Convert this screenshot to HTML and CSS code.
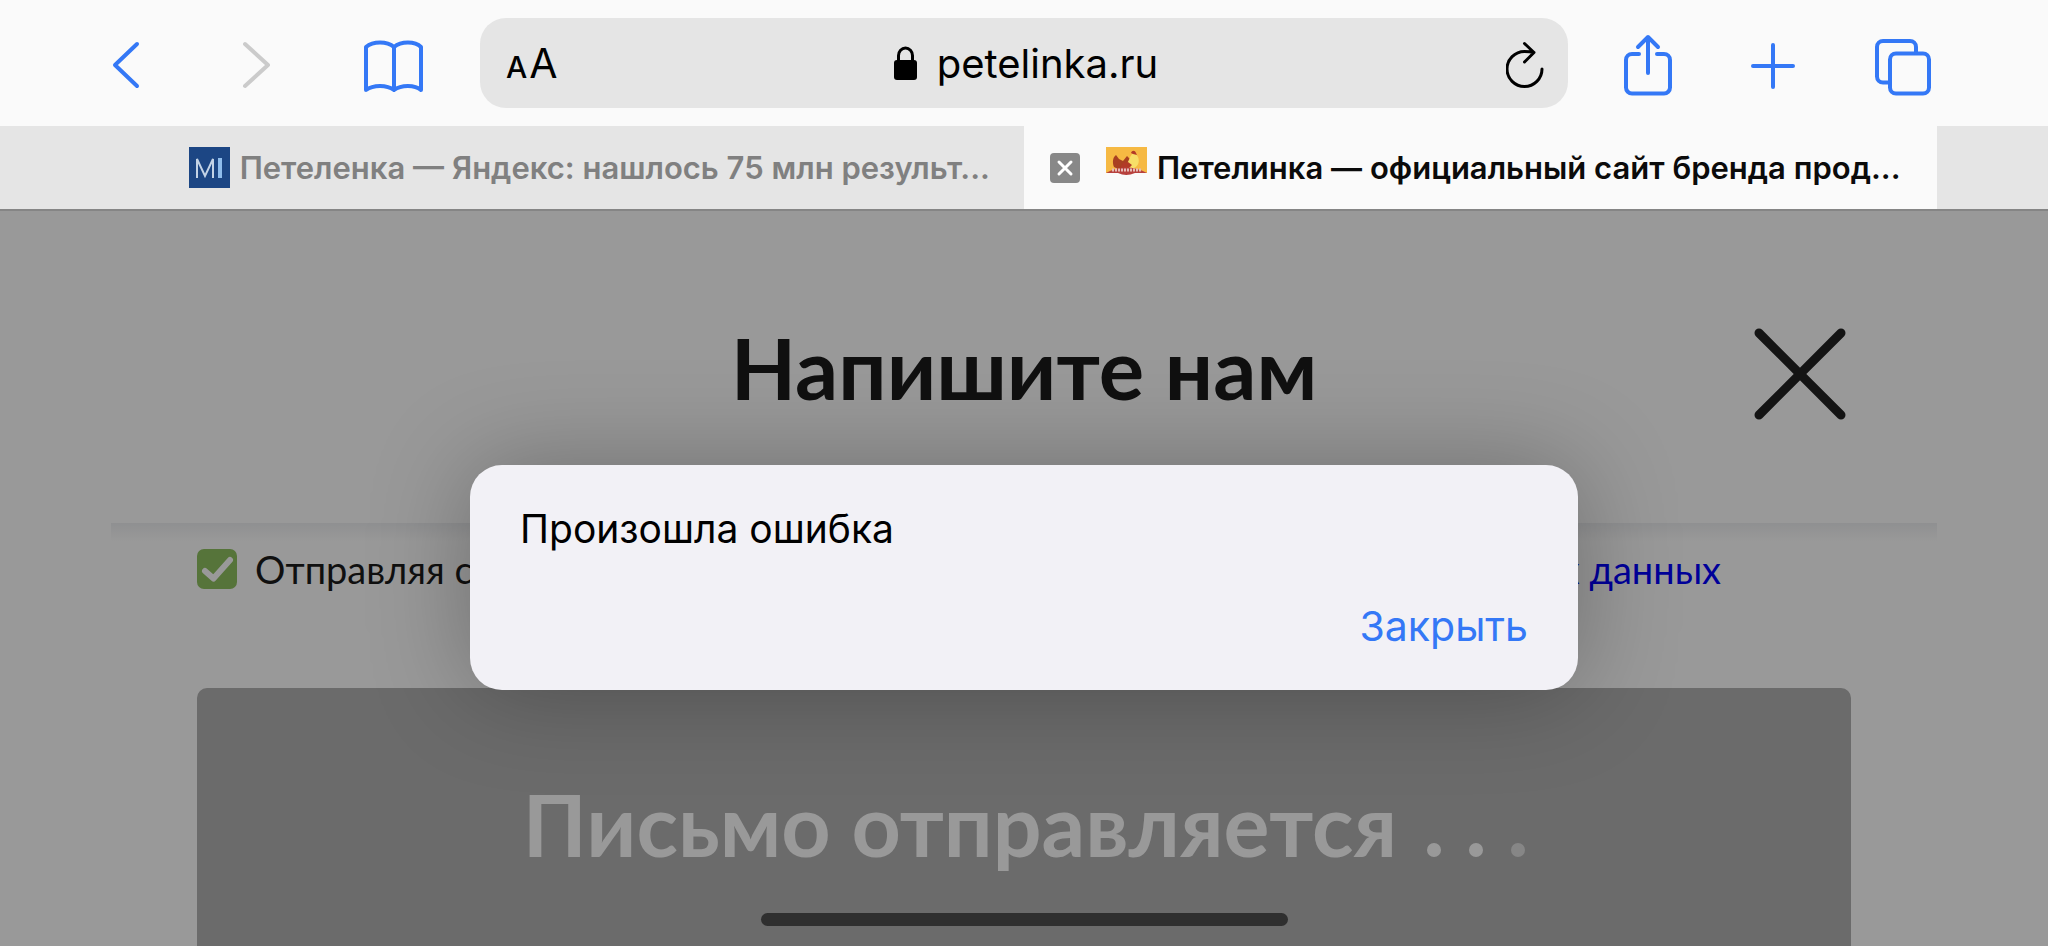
FILE: index.html
```html
<!DOCTYPE html>
<html lang="ru">
<head>
<meta charset="utf-8">
<meta name="viewport" content="width=device-width, initial-scale=1">
<title>Петелинка</title>
<link rel="stylesheet" href="styles.css">
</head>
<body>
<header class="toolbar">
  <nav class="tools tools-left" aria-label="Навигация">
    <button class="tool" type="button" aria-label="Назад"><svg width="60" height="64" viewBox="0 0 60 64"><path d="M41 11 19 32 41 53"/></svg></button>
    <button class="tool tool-off" type="button" aria-label="Вперёд" disabled><svg width="60" height="64" viewBox="0 0 60 64"><path d="M15 11 38 32 15 53"/></svg></button>
    <button class="tool" type="button" aria-label="Закладки"><svg width="60" height="64" viewBox="0 0 60 64"><path d="M30 57V14C23 8 9 8 2 14V57C9 51.500 23 51.500 30 57ZM30 57V14C37 8 51 8 57 14V57C51 51.500 37 51.500 30 57Z"/></svg></button>
  </nav>
  <div class="address">
    <button class="reader" type="button" aria-label="Настройки текста"><span class="reader-small">A</span><span class="reader-big">A</span></button>
    <div class="site">
      <svg width="23" height="34" viewBox="0 0 23 34"><rect y="14" width="23" height="20" rx="3"/><path class="shackle" d="M4.500 15V9.500a7 7.500 0 0 1 14 0V15"/></svg>
      <span>petelinka.ru</span>
    </div>
    <button class="reload" type="button" aria-label="Обновить"><svg width="40" height="52" viewBox="0 0 40 52"><path d="M36 32A17.500 17.500 0 1 1 18.500 14.500Q24 14.500 28 15.500M18.500 6.500 28 15.500 18.500 25"/></svg></button>
  </div>
  <nav class="tools tools-right" aria-label="Действия">
    <button class="tool" type="button" aria-label="Поделиться"><svg width="60" height="64" viewBox="0 0 60 64"><path d="M21 21H14a6 6 0 0 0-6 6V54.500a6 6 0 0 0 6 6H46a6 6 0 0 0 6-6V27a6 6 0 0 0-6-6H39M30 40V4M20 14 30 4 40 14"/></svg></button>
    <button class="tool" type="button" aria-label="Новая вкладка"><svg width="60" height="64" viewBox="0 0 60 64"><path d="M27 12V54M7 33H47"/></svg></button>
    <button class="tool" type="button" aria-label="Вкладки"><svg width="60" height="64" viewBox="0 0 60 64"><rect x="16" y="20.500" width="39" height="40" rx="6"/><path d="M16 49.500H9a6 6 0 0 1-6-6V14a6 6 0 0 1 6-6H36a6 6 0 0 1 6 6V20"/></svg></button>
  </nav>
</header>

<div class="tabs">
  <a class="tab" href="#search">
    <svg class="favicon" width="41" height="41" viewBox="0 0 41 41"><rect width="41" height="41" fill="#1c4684"/><path d="M8 31V12L16 29 24 12V31" fill="none" stroke="#c3d3e6" stroke-width="2"/><path d="M31 11V31" stroke="#8fbdec" stroke-width="4"/></svg>
    <span>Петеленка — Яндекс: нашлось 75 млн результ...</span>
  </a>
  <div class="tab tab-active">
    <button class="tab-close" type="button" aria-label="Закрыть вкладку"><svg width="30" height="30" viewBox="0 0 30 30"><path d="M9 9 21 21M21 9 9 21"/></svg></button>
    <svg class="favicon" width="41" height="41" viewBox="0 0 41 41">
      <rect width="41" height="26" fill="#f6b943"/>
      <path d="M8 20C6 15 7 10 10 8L13 12 17 14 21 9 24 12 25 20 20 22H12Z" fill="#a94022"/>
      <path d="M20 17C23 15 23 11 26 7L30 7 32 10C34 15 32 19 28 21L20 21Z" fill="#f7df68"/>
      <path d="M25 6C26 3 29 3 30 6L31 8 27 7ZM17 16 22 15 26 18 23 21 14 21Z" fill="#b23a27"/>
      <path d="M0 26Q20 15 41 26H29Q20 30 12 26Z" fill="#b7403d"/>
      <path d="M6 23H35" stroke="#e6bdb8" stroke-width="3" stroke-dasharray="2 1"/>
    </svg>
    <a class="tab-link" href="#site">Петелинка — официальный сайт бренда прод...</a>
  </div>
</div>

<main class="page">
  <section class="form">
    <div class="form-head">
      <h1>Напишите нам</h1>
      <button class="form-close" type="button" aria-label="Закрыть форму"><svg width="92" height="92" viewBox="0 0 92 92"><path d="M5 5 87 87M87 5 5 87"/></svg></button>
    </div>
    <div class="form-body">
      <div class="consent">
        <span class="check">
          <input id="agree" type="checkbox" checked>
          <svg width="40" height="40" viewBox="0 0 40 40"><path d="M8 22 16.500 29.500 33 11"/></svg>
        </span>
        <label for="agree">Отправляя сообщение</label>
        <a href="#policy">персональных данных</a>
      </div>
      <button class="send" type="button">Письмо отправляется <span class="dots"><i></i><i></i><i></i></span></button>
    </div>
  </section>
  <div class="overlay">
    <div class="dialog" role="alertdialog" aria-labelledby="message">
      <p id="message">Произошла ошибка</p>
      <button class="dialog-close" type="button">Закрыть</button>
    </div>
    <div class="home-bar"></div>
  </div>
</main>
</body>
</html>
```
FILE: styles.css
```css
* { box-sizing: border-box; }

body {
  margin: 0;
  height: 100vh;
  display: flex;
  flex-direction: column;
  overflow: hidden;
  background: #fff;
  color: #000;
  font-family: Inter, "Liberation Sans", sans-serif;
}

button {
  padding: 0;
  border: 0;
  background: none;
  color: inherit;
  font: inherit;
}

a { text-decoration: none; }
svg { display: block; flex: none; }

/* Browser toolbar */
.toolbar {
  display: flex;
  align-items: center;
  padding: 18px 114px 18px 96px;
  background: #fafafa;
}

.tools {
  display: flex;
  justify-content: space-between;
  padding-top: 4px;
}
.tools-left { width: 328px; }
.tools-right { width: 316px; }

.tool { color: #3478f6; }
.tool-off { color: #cbcbcb; }

.tool svg,
.reload svg {
  fill: none;
  stroke: currentColor;
  stroke-width: 4;
  stroke-linecap: round;
  stroke-linejoin: round;
}
.reload svg { stroke-width: 3; }

.address {
  flex: 1;
  display: grid;
  grid-template-columns: 1fr auto 1fr;
  align-items: center;
  height: 90px;
  margin: 0 50px 0 56px;
  padding: 0 22px 0 26px;
  border-radius: 26px;
  background: #e5e5e5;
}

.reader {
  display: flex;
  align-items: baseline;
  justify-self: start;
  gap: 2px;
}
.reader-small { font-size: 30px; font-weight: 500; }
.reader-big { font-size: 41px; }

.site {
  display: flex;
  align-items: center;
  gap: 20px;
  font-size: 40px;
}
.shackle { fill: none; stroke: #000; stroke-width: 3; }
.reload { justify-self: end; }

/* Tab strip */
.tabs {
  display: grid;
  grid-template-columns: 1fr 1fr;
  height: 85px;
  padding: 0 111px;
  border-bottom: 2px solid #858585;
  background: #e5e5e5;
  font-size: 31px;
  font-weight: 600;
  white-space: nowrap;
}

.tab {
  display: flex;
  align-items: center;
  justify-content: flex-end;
  gap: 10px;
  padding-right: 34px;
  color: #808080;
}

.tab-active {
  justify-content: flex-start;
  padding: 0 0 0 26px;
  background: #fafafa;
}
.tab-link { color: #0b0b0b; }

.tab-close {
  margin-right: 16px;
  border-radius: 4px;
  background: #888;
}
.tab-close path { stroke: #fff; stroke-width: 3; stroke-linecap: round; }

/* Web page */
.page {
  position: relative;
  flex: 1;
  overflow: hidden;
  color: #1c1c1c;
  font-family: Lato, "Open Sans", sans-serif;
}

.form { margin: 0 111px; }

.form-head {
  display: grid;
  grid-template-columns: 1fr auto 1fr;
  align-items: center;
  height: 312px;
  padding: 0 91px;
}
.form-head h1 {
  grid-column: 2;
  margin: 0;
  font-size: 85px;
  font-weight: 700;
}
.form-close {
  justify-self: end;
  margin-top: 14px;
}
.form-close path { stroke: #222; stroke-width: 9; stroke-linecap: round; }

.form-body {
  padding: 18px 86px 0;
  background: linear-gradient(#eff0f2, #fff 18px);
}

.consent {
  display: flex;
  align-items: center;
  gap: 18px;
  padding-right: 130px;
  font-size: 38px;
  line-height: 56px;
}
.consent a { margin-left: auto; color: #00f; }

.check { display: grid; }
.check input,
.check svg { grid-area: 1 / 1; }
.check input {
  width: 40px;
  height: 40px;
  margin: 0;
  appearance: none;
  border-radius: 7px;
  background: #8fc161;
}
.check svg { pointer-events: none; }
.check path {
  fill: none;
  stroke: #fff;
  stroke-width: 6;
  stroke-linecap: round;
  stroke-linejoin: round;
}

.send {
  display: flex;
  justify-content: center;
  align-items: baseline;
  gap: 30px;
  width: 100%;
  height: 280px;
  margin-top: 91px;
  padding-top: 84px;
  border-radius: 10px;
  background: #b2b2b2;
  color: #fff;
  font-size: 86px;
  font-weight: 700;
}
.dots { display: flex; gap: 28px; }
.dots i {
  width: 14px;
  height: 14px;
  border-radius: 50%;
  background: #fff;
}
.dots i:last-child { background: #dfdfdf; }

/* Alert */
.overlay {
  position: absolute;
  inset: 0;
  display: grid;
  place-items: center;
  background: rgba(0, 0, 0, .4);
}

.dialog {
  display: flex;
  flex-direction: column;
  justify-content: space-between;
  width: 54.1%;
  min-height: 225px;
  margin-bottom: 2px;
  padding: 40px 50px;
  border-radius: 32px;
  background: #f2f1f6;
  box-shadow: 0 0 100px rgba(0, 0, 0, .28);
  color: #000;
  font-family: Inter, "Liberation Sans", sans-serif;
  font-size: 39px;
  line-height: 48px;
}
.dialog p { margin: 0; }
.dialog-close {
  align-self: flex-end;
  color: #3478f6;
  font-size: 41px;
}

.home-bar {
  position: absolute;
  bottom: 20px;
  width: 527px;
  height: 13px;
  border-radius: 7px;
  background: #2f2f2f;
}
```
